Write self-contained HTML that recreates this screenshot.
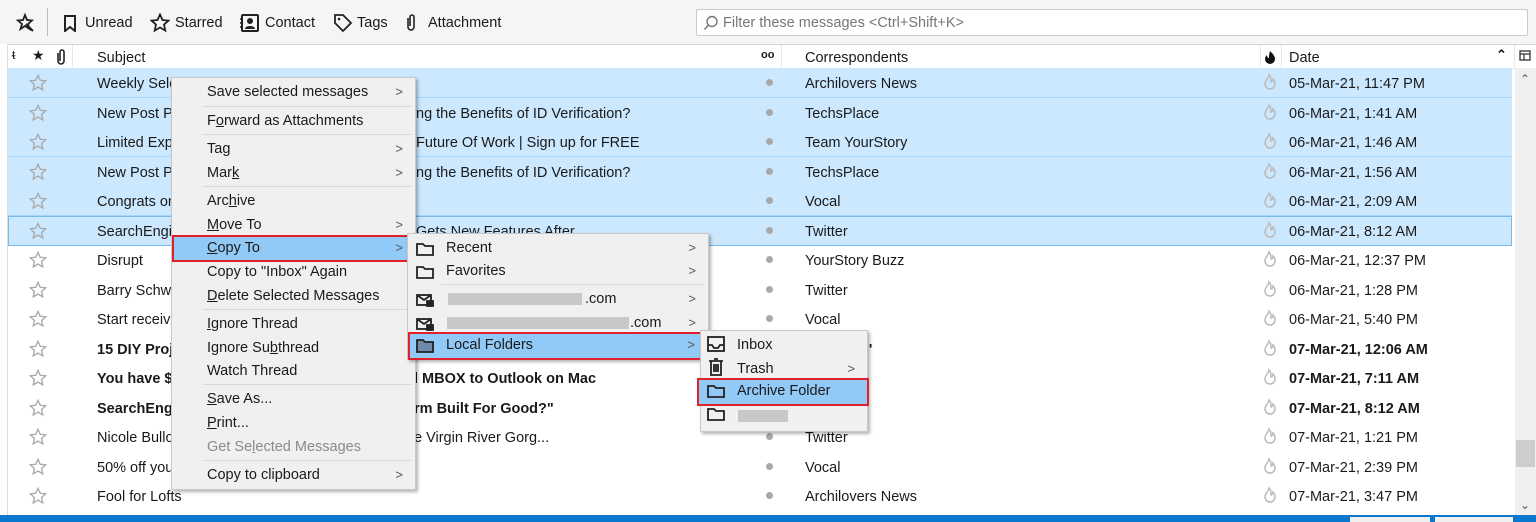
<!DOCTYPE html><html><head><style>
body{margin:0;width:1536px;height:522px;overflow:hidden;background:#fff;font-family:"Liberation Sans",sans-serif;font-size:14.5px;color:#1a1a1a;position:relative}
.a{position:absolute;white-space:nowrap}
.tb{left:0;top:0;width:1536px;height:44px;background:#f5f5f5;border-bottom:1px solid #d6d6d6}
.hd{left:0;top:45px;width:1515px;height:23px;background:#fff;border-bottom:1px solid #e5e5e5}
.row{position:absolute;left:8px;width:1504px;height:29px}
.sel{background:#cce8ff;border-bottom:1px solid #a6d6fb}
.star{position:absolute;left:21px;top:6px}
.t{position:absolute;top:8px}
.b{font-weight:bold}
.dot{position:absolute;left:758px;top:11px;width:7px;height:7px;border-radius:50%;background:#a8a8a8}
.fl{position:absolute;left:1255px;top:5px}
.menu{position:absolute;background:#f0f0f0;border:1px solid #c8c8c8;box-shadow:2px 2px 3px rgba(0,0,0,.3)}
.mi{position:absolute;left:0;right:0;height:24px;line-height:24px}
.mi span{position:absolute}
.ar{position:absolute;right:12px;color:#555;font-size:13px}
.sep{position:absolute;height:1px;background:#d7d7d7}
.hl{background:#91c9f7;outline:2px solid #e0202a;outline-offset:-1px}
.blur{position:absolute;background:#c8c8c8;height:12px}
u{text-decoration:underline}
</style></head><body>
<div class="a tb"></div>
<svg class="a" style="left:16px;top:13px" width="20" height="20" viewBox="0 0 20 20"><path d="M9 2l2 5 5 .5-4 3.5 1.5 5L9 13l-4.5 3L6 11 2 7.5 7 7z" fill="none" stroke="#222" stroke-width="1.8"/><path d="M10 11l7 7" stroke="#222" stroke-width="2"/></svg>
<div class="a" style="left:47px;top:8px;width:1px;height:28px;background:#bbb"></div>
<svg class="a" style="left:63px;top:15px" width="14" height="17"><path d="M2 1h10v15l-5-4-5 4z" fill="none" stroke="#222" stroke-width="2"/></svg>
<div class="a" style="left:85px;top:15px">Unread</div>
<svg class="a" style="left:150px;top:13px" width="20" height="20" viewBox="0 0 20 20"><path d="M10 1.5l2.5 5.5 6 .6-4.5 4 1.3 6L10 14.5 4.7 17.6 6 11.6 1.5 7.6l6-.6z" fill="none" stroke="#222" stroke-width="1.8"/></svg>
<div class="a" style="left:175px;top:15px">Starred</div>
<svg class="a" style="left:240px;top:14px" width="20" height="18"><rect x="2" y="1" width="16" height="16" rx="1" fill="none" stroke="#222" stroke-width="2"/><circle cx="10" cy="7" r="3" fill="#222"/><path d="M5 15c0-4 10-4 10 0z" fill="#222"/><path d="M0 5h3M0 9h3M0 13h3" stroke="#222" stroke-width="1.5"/></svg>
<div class="a" style="left:265px;top:15px">Contact</div>
<svg class="a" style="left:333px;top:13px" width="20" height="20" viewBox="0 0 20 20"><path d="M2 2h8l8 8-8 8-8-8z" fill="none" stroke="#222" stroke-width="1.8"/><circle cx="6" cy="6" r="1.3" fill="#222"/></svg>
<div class="a" style="left:357px;top:15px">Tags</div>
<svg class="a" style="left:405px;top:13px" width="12" height="20"><path d="M3 5v9a3 3 0 006 0V4a2 2 0 00-4 0v9" fill="none" stroke="#222" stroke-width="1.6"/></svg>
<div class="a" style="left:428px;top:15px">Attachment</div>
<div class="a" style="left:696px;top:9px;width:830px;height:25px;background:#fff;border:1px solid #ccc;border-radius:2px"></div>
<svg class="a" style="left:703px;top:15px" width="16" height="16"><circle cx="9" cy="6.5" r="5" fill="none" stroke="#777" stroke-width="1.4"/><path d="M5.5 10l-4 4.5" stroke="#777" stroke-width="1.5"/></svg>
<div class="a" style="left:723px;top:15px;color:#777">Filter these messages &lt;Ctrl+Shift+K&gt;</div>
<div class="a hd"></div>
<div class="a" style="left:12px;top:48px;font-size:12px">ᵵ</div>
<div class="a" style="left:32px;top:47px;font-size:14px">★</div>
<svg class="a" style="left:55px;top:48px" width="12" height="18"><path d="M3 5v8a3 3 0 006 0V4a2 2 0 00-4 0v9" fill="none" stroke="#222" stroke-width="1.6"/></svg>
<div class="a" style="left:72px;top:45px;width:1px;height:22px;background:#e5e5e5"></div>
<div class="a" style="left:97px;top:50px">Subject</div>
<div class="a" style="left:761px;top:49px;font-size:11px;font-weight:bold">oo</div>
<div class="a" style="left:781px;top:45px;width:1px;height:22px;background:#e5e5e5"></div>
<div class="a" style="left:805px;top:50px">Correspondents</div>
<div class="a" style="left:1260px;top:45px;width:1px;height:22px;background:#e5e5e5"></div>
<svg class="a" style="left:1264px;top:50px" width="12" height="14"><path d="M6 1c3 3 5 5 5 8a5 5 0 01-10 0c0-2 1-3 2-4 0 2 1 3 2 3 0-2 0-4 1-7z" fill="#111"/></svg>
<div class="a" style="left:1281px;top:45px;width:1px;height:22px;background:#e5e5e5"></div>
<div class="a" style="left:1289px;top:50px">Date</div>
<div class="a" style="left:1496px;top:47px;font-size:13px;font-weight:bold">⌃</div>
<div class="a" style="left:1514px;top:45px;width:1px;height:22px;background:#e5e5e5"></div>
<svg class="a" style="left:1519px;top:50px" width="12" height="12"><rect x="1" y="1" width="10" height="9" fill="none" stroke="#333" stroke-width="1.3"/><path d="M1 4h10M5 4v6" stroke="#333" stroke-width="1.2"/></svg>
<div class="a" style="left:1515px;top:68px;width:21px;height:447px;background:#f0f0f0"></div>
<div class="a" style="left:1520px;top:72px;font-size:12px;color:#555">⌃</div>
<div class="a" style="left:1516px;top:440px;width:19px;height:27px;background:#cdcdcd"></div>
<div class="a" style="left:1520px;top:498px;font-size:12px;color:#555">⌄</div>
<div class="a" style="left:0;top:44px;width:7px;height:471px;border-right:1px solid #ddd;background:#fff"></div>
<div class="a" style="left:0;top:515px;width:1536px;height:7px;background:#0b78d0"></div>
<div class="a" style="left:1350px;top:517px;width:80px;height:5px;background:#f0f0f0"></div>
<div class="a" style="left:1435px;top:517px;width:78px;height:5px;background:#f0f0f0"></div>

<div class="row sel" style="top:68px"><span class="t" style="left:89px">Weekly Selection</span><div class="dot"></div><span class="t" style="left:797px">Archilovers News</span><span class="t" style="left:1281px">05-Mar-21, 11:47 PM</span></div>
<div class="row sel" style="top:97.5px"><span class="t" style="left:89px">New Post Published</span><span class="t" style="left:408px">ng the Benefits of ID Verification?</span><div class="dot"></div><span class="t" style="left:797px">TechsPlace</span><span class="t" style="left:1281px">06-Mar-21, 1:41 AM</span></div>
<div class="row sel" style="top:127px"><span class="t" style="left:89px">Limited Expo</span><span class="t" style="left:408px">Future Of Work | Sign up for FREE</span><div class="dot"></div><span class="t" style="left:797px">Team YourStory</span><span class="t" style="left:1281px">06-Mar-21, 1:46 AM</span></div>
<div class="row sel" style="top:156.5px"><span class="t" style="left:89px">New Post Published</span><span class="t" style="left:408px">ng the Benefits of ID Verification?</span><div class="dot"></div><span class="t" style="left:797px">TechsPlace</span><span class="t" style="left:1281px">06-Mar-21, 1:56 AM</span></div>
<div class="row sel" style="top:186px"><span class="t" style="left:89px">Congrats on</span><div class="dot"></div><span class="t" style="left:797px">Vocal</span><span class="t" style="left:1281px">06-Mar-21, 2:09 AM</span></div>
<div class="row sel" style="top:215.5px;outline:1px solid #7ab8e8;outline-offset:-1px"><span class="t" style="left:89px">SearchEngine</span><span class="t" style="left:408px">Gets New Features After</span><div class="dot"></div><span class="t" style="left:797px">Twitter</span><span class="t" style="left:1281px">06-Mar-21, 8:12 AM</span></div>
<div class="row" style="top:245px"><span class="t" style="left:89px">Disrupt</span><div class="dot"></div><span class="t" style="left:797px">YourStory Buzz</span><span class="t" style="left:1281px">06-Mar-21, 12:37 PM</span></div>
<div class="row" style="top:274.5px"><span class="t" style="left:89px">Barry Schwartz</span><div class="dot"></div><span class="t" style="left:797px">Twitter</span><span class="t" style="left:1281px">06-Mar-21, 1:28 PM</span></div>
<div class="row" style="top:304px"><span class="t" style="left:89px">Start receiving</span><div class="dot"></div><span class="t" style="left:797px">Vocal</span><span class="t" style="left:1281px">06-Mar-21, 5:40 PM</span></div>
<div class="row b" style="top:333.5px"><span class="t" style="left:89px">15 DIY Projects</span><span class="t" style="left:852px">n'</span><span class="t" style="left:1281px">07-Mar-21, 12:06 AM</span></div>
<div class="row b" style="top:363px"><span class="t" style="left:89px">You have $</span><span class="t" style="left:406px">l MBOX to Outlook on Mac</span><span class="t" style="left:1281px">07-Mar-21, 7:11 AM</span></div>
<div class="row b" style="top:392.5px"><span class="t" style="left:89px">SearchEngine</span><span class="t" style="left:406px">rm Built For Good?"</span><span class="t" style="left:1281px">07-Mar-21, 8:12 AM</span></div>
<div class="row" style="top:422px"><span class="t" style="left:89px">Nicole Bullock</span><span class="t" style="left:406px">e Virgin River Gorg...</span><div class="dot"></div><span class="t" style="left:797px">Twitter</span><span class="t" style="left:1281px">07-Mar-21, 1:21 PM</span></div>
<div class="row" style="top:451.5px"><span class="t" style="left:89px">50% off your</span><div class="dot"></div><span class="t" style="left:797px">Vocal</span><span class="t" style="left:1281px">07-Mar-21, 2:39 PM</span></div>
<div class="row" style="top:481px"><span class="t" style="left:89px">Fool for Lofts</span><div class="dot"></div><span class="t" style="left:797px">Archilovers News</span><span class="t" style="left:1281px">07-Mar-21, 3:47 PM</span></div>
<script>
document.querySelectorAll('.row').forEach(function(r){
 r.insertAdjacentHTML('beforeend','<svg class="star" width="18" height="18" viewBox="0 0 20 20"><path d="M10 1.5l2.5 5.5 6 .6-4.5 4 1.3 6L10 14.5 4.7 17.6 6 11.6 1.5 7.6l6-.6z" fill="none" stroke="#a9a9a9" stroke-width="1.5"/></svg><svg class="fl" width="14" height="18" viewBox="0 0 14 18"><path d="M6 2c0 3-4 5-4 9a5 5 0 0010 0c0-2-1-4-2-5 0 2-1 3-2 3 0-3 0-5-2-7z" fill="none" stroke="#bbb" stroke-width="1.5"/></svg>');
});
</script>

<div class="menu" style="left:171px;top:77px;width:243px;height:411px">
<div class="mi" style="top:2px"><span style="left:35px">Save selected messages</span><span class="ar">&gt;</span></div>
<div class="sep" style="left:31px;right:4px;top:28px"></div>
<div class="mi" style="top:31px"><span style="left:35px">F<u>o</u>rward as Attachments</span></div>
<div class="sep" style="left:31px;right:4px;top:56px"></div>
<div class="mi" style="top:59px"><span style="left:35px">Ta<u>g</u></span><span class="ar">&gt;</span></div>
<div class="mi" style="top:83px"><span style="left:35px">Mar<u>k</u></span><span class="ar">&gt;</span></div>
<div class="sep" style="left:31px;right:4px;top:108px"></div>
<div class="mi" style="top:111px"><span style="left:35px">Arc<u>h</u>ive</span></div>
<div class="mi" style="top:135px"><span style="left:35px"><u>M</u>ove To</span><span class="ar">&gt;</span></div>
<div class="mi hl" style="top:158px;left:1px;right:4px;height:25px"><span style="left:34px"><u>C</u>opy To</span><span class="ar" style="right:8px">&gt;</span></div>
<div class="mi" style="top:182px"><span style="left:35px">Copy to "Inbox" Again</span></div>
<div class="mi" style="top:206px"><span style="left:35px"><u>D</u>elete Selected Messages</span></div>
<div class="sep" style="left:31px;right:4px;top:231px"></div>
<div class="mi" style="top:234px"><span style="left:35px"><u>I</u>gnore Thread</span></div>
<div class="mi" style="top:258px"><span style="left:35px">Ignore Su<u>b</u>thread</span></div>
<div class="mi" style="top:281px"><span style="left:35px">Watch Thread</span></div>
<div class="sep" style="left:31px;right:4px;top:306px"></div>
<div class="mi" style="top:309px"><span style="left:35px"><u>S</u>ave As...</span></div>
<div class="mi" style="top:333px"><span style="left:35px"><u>P</u>rint...</span></div>
<div class="mi" style="top:357px;color:#8a8a8a"><span style="left:35px">Get Se<u>l</u>ected Messages</span></div>
<div class="sep" style="left:31px;right:4px;top:382px"></div>
<div class="mi" style="top:385px"><span style="left:35px">Copy to clipboard</span><span class="ar">&gt;</span></div>
</div>

<div class="menu" style="left:407px;top:233px;width:300px;height:125px">
<div class="mi" style="top:2px"><span style="left:38px">Recent</span><span class="ar">&gt;</span></div>
<div class="mi" style="top:25px"><span style="left:38px">Favorites</span><span class="ar">&gt;</span></div>
<div class="sep" style="left:33px;right:4px;top:50px"></div>
<div class="mi" style="top:53px"><span style="left:177px">.com</span><span class="ar">&gt;</span></div>
<div class="blur" style="left:40px;top:59px;width:134px"></div>
<div class="mi" style="top:77px"><span style="left:222px">.com</span><span class="ar">&gt;</span></div>
<div class="blur" style="left:39px;top:83px;width:182px"></div>
<div class="mi hl" style="top:99px;left:1px;right:5px;height:26px"><span style="left:37px">Local Folders</span><span class="ar" style="right:8px">&gt;</span></div>
</div>
<svg class="a" style="left:415px;top:239px" width="20" height="96"><g fill="none" stroke="#222" stroke-width="1.8"><path d="M2 5h6l2 2h8v9H2z"/><path d="M2 28h6l2 2h8v9H2z"/><rect x="2" y="56" width="14" height="10"/><path d="M2 56l7 5 7-5"/><rect x="12" y="62" width="6" height="5" fill="#222"/><rect x="2" y="80" width="14" height="10"/><path d="M2 80l7 5 7-5"/><rect x="12" y="86" width="6" height="5" fill="#222"/></g></svg>
<svg class="a" style="left:415px;top:337px" width="20" height="18"><path d="M2 3h6l2 2h8v10H2z" fill="#6e8aa8" stroke="#222" stroke-width="1.8"/></svg>

<div class="menu" style="left:700px;top:330px;width:166px;height:100px">
<div class="mi" style="top:2px"><span style="left:36px">Inbox</span></div>
<div class="mi" style="top:26px"><span style="left:36px">Trash</span><span class="ar">&gt;</span></div>
<div class="mi hl" style="top:48px;left:-3px;right:-1px;height:26px"><span style="left:39px">Archive Folder</span></div>
<div class="blur" style="left:37px;top:79px;width:50px"></div>
</div>
<svg class="a" style="left:706px;top:334px" width="22" height="94"><g fill="none" stroke="#222" stroke-width="1.8"><rect x="2" y="3" width="16" height="14"/><path d="M2 11h4l2 3h4l2-3h4"/><path d="M3 27h14M8 25h4M5 27v14h10V27M8 30v8M10 30v8M12 30v8"/><path d="M2 52h6l2 2h8v9H2z"/><path d="M2 75h6l2 2h8v9H2z"/></g></svg>
</body></html>
